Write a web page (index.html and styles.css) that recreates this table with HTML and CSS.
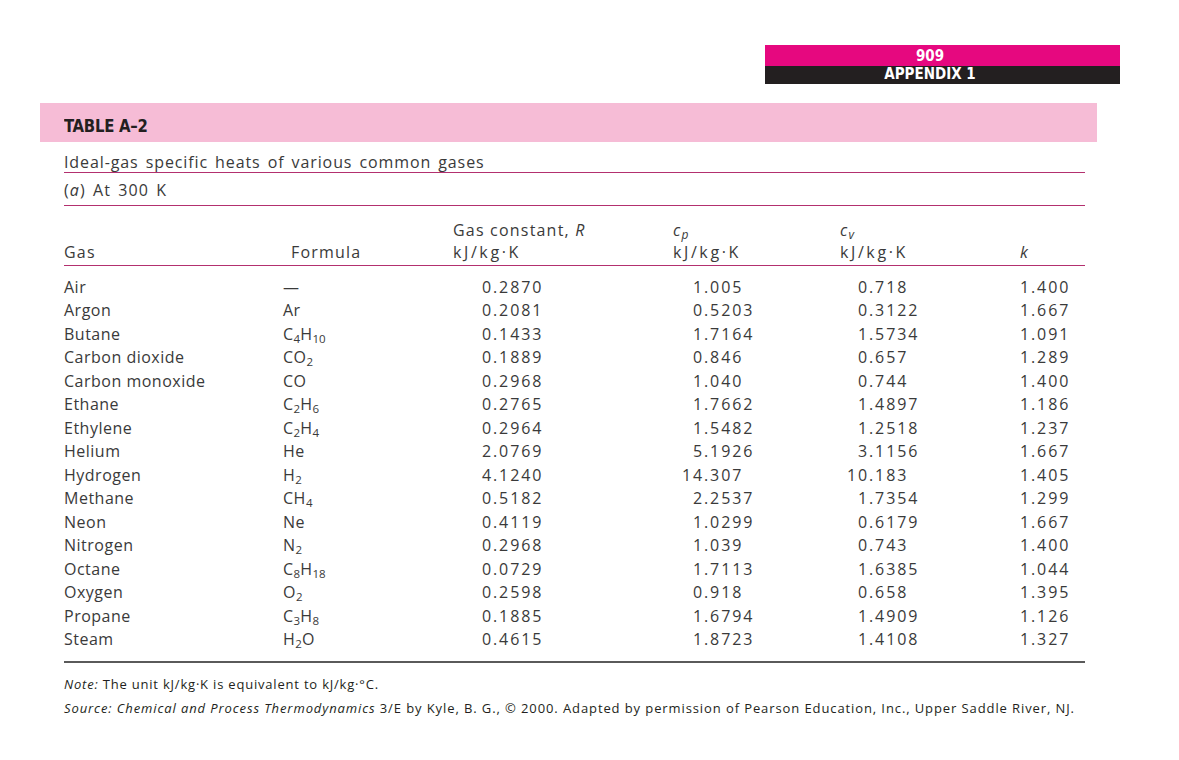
FILE: index.html
```html
<!DOCTYPE html>
<html lang="en">
<head>
<meta charset="utf-8">
<title>Table A-2</title>
<link rel="stylesheet" href="styles.css">
</head>
<body>
<div class="page">
  <div class="appendix">
    <div class="pageno">909</div>
    <div class="applabel">APPENDIX 1</div>
  </div>
  <div class="band"><span class="tabletitle">TABLE A–2</span></div>
  <div class="content">
    <div class="subtitle">Ideal-gas specific heats of various common gases</div>
    <div class="part">(<i>a</i>) At 300 K</div>
    <div class="grid head">
      <div class="hc">Gas</div>
      <div class="hc fc">Formula</div>
      <div class="hc"><span class="h1">Gas constant, <i>R</i></span><span class="unit">kJ/kg·K</span></div>
      <div class="hc"><span class="h1"><i>c<sub>p</sub></i></span><span class="unit">kJ/kg·K</span></div>
      <div class="hc"><span class="h1"><i>c<sub>v</sub></i></span><span class="unit">kJ/kg·K</span></div>
      <div class="hc kc"><i>k</i></div>
    </div>
    <div class="body">
      <div class="grid row"><div>Air</div><div>—</div><div class="n r"><span class="i">0</span>.2870</div><div class="n cp"><span class="i">1</span>.005</div><div class="n cv"><span class="i">0</span>.718</div><div class="n kk"><span class="i">1</span>.400</div></div>
      <div class="grid row"><div>Argon</div><div>Ar</div><div class="n r"><span class="i">0</span>.2081</div><div class="n cp"><span class="i">0</span>.5203</div><div class="n cv"><span class="i">0</span>.3122</div><div class="n kk"><span class="i">1</span>.667</div></div>
      <div class="grid row"><div>Butane</div><div>C<sub>4</sub>H<sub>10</sub></div><div class="n r"><span class="i">0</span>.1433</div><div class="n cp"><span class="i">1</span>.7164</div><div class="n cv"><span class="i">1</span>.5734</div><div class="n kk"><span class="i">1</span>.091</div></div>
      <div class="grid row"><div>Carbon dioxide</div><div>CO<sub>2</sub></div><div class="n r"><span class="i">0</span>.1889</div><div class="n cp"><span class="i">0</span>.846</div><div class="n cv"><span class="i">0</span>.657</div><div class="n kk"><span class="i">1</span>.289</div></div>
      <div class="grid row"><div>Carbon monoxide</div><div>CO</div><div class="n r"><span class="i">0</span>.2968</div><div class="n cp"><span class="i">1</span>.040</div><div class="n cv"><span class="i">0</span>.744</div><div class="n kk"><span class="i">1</span>.400</div></div>
      <div class="grid row"><div>Ethane</div><div>C<sub>2</sub>H<sub>6</sub></div><div class="n r"><span class="i">0</span>.2765</div><div class="n cp"><span class="i">1</span>.7662</div><div class="n cv"><span class="i">1</span>.4897</div><div class="n kk"><span class="i">1</span>.186</div></div>
      <div class="grid row"><div>Ethylene</div><div>C<sub>2</sub>H<sub>4</sub></div><div class="n r"><span class="i">0</span>.2964</div><div class="n cp"><span class="i">1</span>.5482</div><div class="n cv"><span class="i">1</span>.2518</div><div class="n kk"><span class="i">1</span>.237</div></div>
      <div class="grid row"><div>Helium</div><div>He</div><div class="n r"><span class="i">2</span>.0769</div><div class="n cp"><span class="i">5</span>.1926</div><div class="n cv"><span class="i">3</span>.1156</div><div class="n kk"><span class="i">1</span>.667</div></div>
      <div class="grid row"><div>Hydrogen</div><div>H<sub>2</sub></div><div class="n r"><span class="i">4</span>.1240</div><div class="n cp"><span class="i">14</span>.307</div><div class="n cv"><span class="i">10</span>.183</div><div class="n kk"><span class="i">1</span>.405</div></div>
      <div class="grid row"><div>Methane</div><div>CH<sub>4</sub></div><div class="n r"><span class="i">0</span>.5182</div><div class="n cp"><span class="i">2</span>.2537</div><div class="n cv"><span class="i">1</span>.7354</div><div class="n kk"><span class="i">1</span>.299</div></div>
      <div class="grid row"><div>Neon</div><div>Ne</div><div class="n r"><span class="i">0</span>.4119</div><div class="n cp"><span class="i">1</span>.0299</div><div class="n cv"><span class="i">0</span>.6179</div><div class="n kk"><span class="i">1</span>.667</div></div>
      <div class="grid row"><div>Nitrogen</div><div>N<sub>2</sub></div><div class="n r"><span class="i">0</span>.2968</div><div class="n cp"><span class="i">1</span>.039</div><div class="n cv"><span class="i">0</span>.743</div><div class="n kk"><span class="i">1</span>.400</div></div>
      <div class="grid row"><div>Octane</div><div>C<sub>8</sub>H<sub>18</sub></div><div class="n r"><span class="i">0</span>.0729</div><div class="n cp"><span class="i">1</span>.7113</div><div class="n cv"><span class="i">1</span>.6385</div><div class="n kk"><span class="i">1</span>.044</div></div>
      <div class="grid row"><div>Oxygen</div><div>O<sub>2</sub></div><div class="n r"><span class="i">0</span>.2598</div><div class="n cp"><span class="i">0</span>.918</div><div class="n cv"><span class="i">0</span>.658</div><div class="n kk"><span class="i">1</span>.395</div></div>
      <div class="grid row"><div>Propane</div><div>C<sub>3</sub>H<sub>8</sub></div><div class="n r"><span class="i">0</span>.1885</div><div class="n cp"><span class="i">1</span>.6794</div><div class="n cv"><span class="i">1</span>.4909</div><div class="n kk"><span class="i">1</span>.126</div></div>
      <div class="grid row"><div>Steam</div><div>H<sub>2</sub>O</div><div class="n r"><span class="i">0</span>.4615</div><div class="n cp"><span class="i">1</span>.8723</div><div class="n cv"><span class="i">1</span>.4108</div><div class="n kk"><span class="i">1</span>.327</div></div>
    </div>
    <div class="note"><i>Note:</i> The unit kJ/kg·K is equivalent to kJ/kg·°C.</div>
    <div class="source"><i>Source: Chemical and Process Thermodynamics</i> 3/E by Kyle, B. G., © 2000. Adapted by permission of Pearson Education, Inc., Upper Saddle River, NJ.</div>
  </div>
</div>
</body>
</html>
```

FILE: styles.css
```css
html, body {
  margin: 0;
  padding: 0;
  background: #ffffff;
}
.page {
  width: 1179px;
  height: 760px;
  font-family: "Open Sans", "Liberation Sans", sans-serif;
  color: #3a3a3a;
  padding-top: 45px;
  box-sizing: border-box;
}
.appendix {
  margin-left: 765px;
  width: 355px;
  font-family: "DejaVu Sans Condensed", "DejaVu Sans", sans-serif;
  font-weight: bold;
  color: #ffffff;
  text-align: center;
  font-size: 15px;
}
.pageno {
  background: #e6087f;
  height: 21px;
  line-height: 23px;
  padding-right: 25px;
}
.applabel {
  background: #231f20;
  height: 18px;
  line-height: 17px;
  padding-right: 25px;
}
.band {
  margin-top: 19px;
  margin-left: 40px;
  width: 1057px;
  height: 39px;
  background: #f6bcd6;
  box-sizing: border-box;
  padding-left: 24px;
  padding-top: 12px;
}
.tabletitle {
  display: inline-block;
  font-family: "DejaVu Sans Condensed", "DejaVu Sans", sans-serif;
  font-weight: bold;
  font-size: 18px;
  line-height: 22px;
  color: #231f20;
  transform: scaleX(0.92);
  transform-origin: left center;
  letter-spacing: -0.3px;
}
.content {
  margin-left: 64px;
  width: 1021px;
  font-size: 16px;
  letter-spacing: 0.5px;
}
.subtitle {
  height: 31px;
  line-height: 40px;
  border-bottom: 1px solid #b3306f;
  box-sizing: border-box;
  letter-spacing: 0.9px;
  word-spacing: 2px;
}
.part {
  height: 33px;
  line-height: 35px;
  border-bottom: 1px solid #b3306f;
  box-sizing: border-box;
  letter-spacing: 1.1px;
  word-spacing: 2px;
}
.grid {
  display: grid;
  grid-template-columns: 219px 170px 220px 167px 165px 80px;
}
.head {
  height: 60px;
  border-bottom: 1.5px solid #b3306f;
  box-sizing: border-box;
  align-items: end;
  padding-bottom: 2px;
  line-height: 22px;
  letter-spacing: 1.2px;
}
.hc .h1 {
  display: block;
}
.hc .unit {
  letter-spacing: 2.6px;
}
.hc.fc {
  padding-left: 8px;
}
.hc sub {
  font-size: 0.75em;
  line-height: 0;
  vertical-align: -0.25em;
}
.kc {
  padding-left: 15px;
}
.body {
  padding-top: 10px;
  padding-bottom: 9px;
  border-bottom: 2px solid #5a5a5a;
}
.row {
  height: 23.47px;
  line-height: 23.47px;
}
.row sub {
  font-size: 0.72em;
  line-height: 0;
  vertical-align: -0.3em;
  letter-spacing: 0;
}
.n {
  letter-spacing: 1.9px;
}
.n .i {
  display: inline-block;
  width: 22px;
  text-align: right;
}
.n.r { padding-left: 18px; }
.n.cp { padding-left: 9px; }
.n.cv { padding-left: 7px; }
.n.kk { padding-left: 4px; }
.note {
  font-size: 13px;
  color: #231f20;
  margin-top: 13px;
  line-height: 16px;
  letter-spacing: 0.8px;
}
.source {
  font-size: 13px;
  color: #231f20;
  margin-top: 8px;
  line-height: 16px;
  letter-spacing: 0.9px;
}
```
